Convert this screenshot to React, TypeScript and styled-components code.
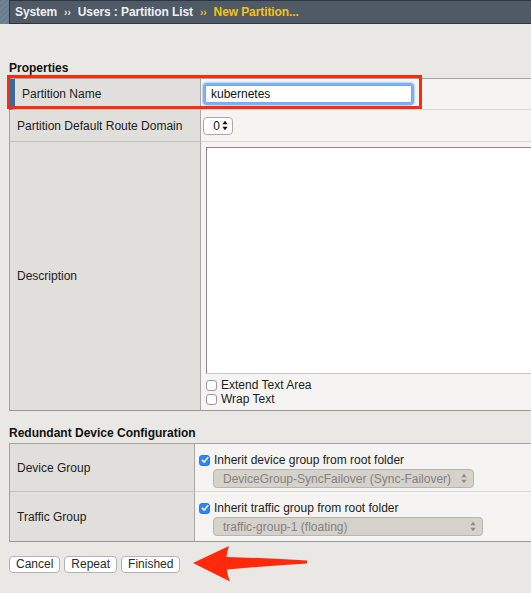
import React from 'react';
import styled, { createGlobalStyle } from 'styled-components';

const GlobalStyle = createGlobalStyle`
  html, body {
    margin: 0;
    padding: 0;
    background: #e9e8e4;
  }
  body {
    font-family: 'Liberation Sans', Arial, sans-serif;
    font-size: 12px;
    color: #1f1f1f;
  }
  #root {
    width: 531px;
    overflow: hidden;
  }
`;

const Page = styled.div`
  width: 531px;
  min-height: 593px;
  overflow: hidden;
`;

const HeaderStrip = styled.div`
  height: 24px;
  padding-left: 9px;
  background: repeating-linear-gradient(135deg, #6a7b8d 0 2px, #738496 2px 4px);
`;

const Breadcrumb = styled.div`
  height: 24px;
  box-sizing: border-box;
  display: flex;
  align-items: center;
  gap: 6px;
  padding-left: 5px;
  background: #4f5a66;
  border: 1px solid #2c353e;
  border-right: none;
  font-weight: bold;
  font-size: 12px;
  color: #eef1f4;
`;

const Crumb = styled.span<{ $current?: boolean }>`
  color: ${(p) => (p.$current ? '#f2c318' : '#eef1f4')};
  letter-spacing: -0.1px;
`;

const Sep = styled.span<{ $current?: boolean }>`
  font-size: 10px;
  margin: 0 1px;
  color: ${(p) => (p.$current ? '#f2c318' : '#dfe4e8')};
`;

const Content = styled.div`
  padding: 0 0 20px 9px;
`;

const SectionTitle = styled.div<{ $top: number }>`
  margin-top: ${(p) => p.$top}px;
  margin-bottom: 3px;
  font-weight: bold;
  font-size: 12px;
  line-height: 14px;
  color: #111;
`;

const TableWrap = styled.div`
  position: relative;
  width: 540px;
`;

const FormTable = styled.div<{ $labelWidth: number }>`
  display: grid;
  grid-template-columns: ${(p) => p.$labelWidth}px 1fr;
  border: 1px solid #a3a29f;
  border-right: none;
  border-bottom: 1px solid #999894;
`;

const LabelCell = styled.div<{ $height: number; $marked?: boolean; $last?: boolean }>`
  height: ${(p) => p.$height}px;
  box-sizing: border-box;
  display: flex;
  align-items: center;
  padding-left: 7px;
  background: #e0dfdb;
  border-right: 1px solid #a9a8a5;
  border-bottom: ${(p) => (p.$last ? 'none' : '1px solid #c4c3bf')};
  border-left: ${(p) => (p.$marked ? '6px solid #3a6898' : 'none')};
  margin-left: ${(p) => (p.$marked ? '-1px' : '0')};
  font-size: 12px;
  color: #1c1c1c;
`;

const ValueCell = styled.div<{ $height: number; $pad: string; $last?: boolean; $center?: boolean }>`
  height: ${(p) => p.$height}px;
  box-sizing: border-box;
  padding: ${(p) => p.$pad};
  background: #f5f4f2;
  border-bottom: ${(p) => (p.$last ? 'none' : '1px solid #d8d7d4')};
  display: flex;
  flex-direction: column;
  justify-content: ${(p) => (p.$center ? 'center' : 'flex-start')};
  align-items: flex-start;
`;

const Highlight = styled.div`
  position: absolute;
  left: -2px;
  top: -3px;
  width: 409px;
  height: 28px;
  border: 3px solid #ff2a0c;
  pointer-events: none;
`;

const TextInput = styled.input`
  width: 207px;
  height: 18px;
  box-sizing: border-box;
  margin-left: 4px;
  padding: 0 5px;
  border: 1px solid #7aa7e8;
  box-shadow: 0 0 0 2px #7fb0f6, 0 0 1px 3px #b9d3f8;
  border-radius: 2px;
  background: #fff;
  font-family: 'Liberation Sans', Arial, sans-serif;
  font-size: 12px;
  color: #111;
  outline: none;
`;

const Spinner = styled.div`
  width: 30px;
  height: 18px;
  box-sizing: border-box;
  margin-left: 2px;
  display: flex;
  align-items: center;
  justify-content: flex-end;
  gap: 2px;
  padding-right: 4px;
  border: 1px solid #a9a9a9;
  border-radius: 4px;
  background: #fff;
  font-size: 12px;
  color: #111;
`;

const TextArea = styled.textarea`
  width: 340px;
  height: 227px;
  box-sizing: border-box;
  margin: 0;
  border: 1px solid #8a8a8a;
  border-right-color: #c8c8c8;
  border-bottom-color: #c8c8c8;
  background: #fff;
  resize: none;
  display: block;
`;

const CheckRow = styled.label`
  display: flex;
  align-items: center;
  gap: 4px;
  height: 14px;
  font-size: 12px;
  color: #1c1c1c;
`;

const Gap = styled.div`
  height: 4px;
`;

const Box = styled.span<{ $checked?: boolean }>`
  width: 11px;
  height: 11px;
  box-sizing: border-box;
  border-radius: 3px;
  display: inline-flex;
  align-items: center;
  justify-content: center;
  border: 1px solid ${(p) => (p.$checked ? '#2d78ee' : '#9c9c9c')};
  background: ${(p) => (p.$checked ? '#3584f5' : '#fff')};
  flex-shrink: 0;
`;

const FakeSelect = styled.div<{ $width: number }>`
  width: ${(p) => p.$width}px;
  height: 19px;
  box-sizing: border-box;
  margin: 2px 0 0 14px;
  display: flex;
  align-items: center;
  justify-content: space-between;
  padding: 0 6px 0 9px;
  border: 1px solid #b8b4ae;
  border-radius: 4px;
  background: #d5d1cb;
  font-size: 12px;
  color: #85827e;
`;

const ButtonBar = styled.div`
  display: flex;
  align-items: center;
  gap: 4px;
  margin-top: 3px;
`;

const Button = styled.button`
  height: 17px;
  box-sizing: border-box;
  padding: 0 6px;
  border: 1px solid #b3b3b3;
  border-radius: 4px;
  background: #fff;
  font-family: 'Liberation Sans', Arial, sans-serif;
  font-size: 12px;
  line-height: 15px;
  color: #2a2a2a;
`;

const Arrow = styled.svg`
  margin-left: 8px;
  flex-shrink: 0;
`;

const Check = () => (
  <svg width="8" height="8" viewBox="0 0 8 8">
    <path d="M1.3 4.2 L3.2 6.1 L6.8 1.6" fill="none" stroke="#fff" strokeWidth="1.5" strokeLinecap="round" strokeLinejoin="round" />
  </svg>
);

const UpDown = ({ color }: { color: string }) => (
  <svg width="6" height="11" viewBox="0 0 6 11">
    <path d="M3 0.8 L5.6 4.3 H0.4 Z" fill={color} />
    <path d="M3 10.2 L5.6 6.7 H0.4 Z" fill={color} />
  </svg>
);

export default function App() {
  return (
    <Page>
      <GlobalStyle />
      <HeaderStrip>
        <Breadcrumb>
          <Crumb>System</Crumb>
          <Sep>››</Sep>
          <Crumb>Users : Partition List</Crumb>
          <Sep $current>››</Sep>
          <Crumb $current>New Partition...</Crumb>
        </Breadcrumb>
      </HeaderStrip>

      <Content>
        <SectionTitle $top={37}>Properties</SectionTitle>
        <TableWrap>
          <FormTable $labelWidth={191}>
            <LabelCell $height={31} $marked>Partition Name</LabelCell>
            <ValueCell $height={31} $pad="0" $center>
              <TextInput defaultValue="kubernetes" />
            </ValueCell>

            <LabelCell $height={32}>Partition Default Route Domain</LabelCell>
            <ValueCell $height={32} $pad="0" $center>
              <Spinner>
                0<UpDown color="#111" />
              </Spinner>
            </ValueCell>

            <LabelCell $height={268} $last>Description</LabelCell>
            <ValueCell $height={268} $pad="5px 0 0 5px" $last>
              <TextArea />
              <Gap />
              <CheckRow>
                <Box />
                Extend Text Area
              </CheckRow>
              <CheckRow>
                <Box />
                Wrap Text
              </CheckRow>
            </ValueCell>
          </FormTable>
          <Highlight />
        </TableWrap>

        <SectionTitle $top={15}>Redundant Device Configuration</SectionTitle>
        <TableWrap>
          <FormTable $labelWidth={185}>
            <LabelCell $height={48}>Device Group</LabelCell>
            <ValueCell $height={48} $pad="9px 0 0 4px">
              <CheckRow>
                <Box $checked>
                  <Check />
                </Box>
                Inherit device group from root folder
              </CheckRow>
              <FakeSelect $width={261}>
                DeviceGroup-SyncFailover (Sync-Failover)
                <UpDown color="#8d8a86" />
              </FakeSelect>
            </ValueCell>

            <LabelCell $height={49} $last>Traffic Group</LabelCell>
            <ValueCell $height={49} $pad="9px 0 0 4px" $last>
              <CheckRow>
                <Box $checked>
                  <Check />
                </Box>
                Inherit traffic group from root folder
              </CheckRow>
              <FakeSelect $width={270}>
                traffic-group-1 (floating)
                <UpDown color="#8d8a86" />
              </FakeSelect>
            </ValueCell>
          </FormTable>
        </TableWrap>

        <ButtonBar>
          <Button>Cancel</Button>
          <Button>Repeat</Button>
          <Button>Finished</Button>
          <Arrow width="116" height="38" viewBox="0 0 116 38">
            <path
              d="M1 18 L37 1 Q35 7 34.5 12 Q75 13 115 15.5 L115 18.5 Q75 21 35 24.5 Q35 30 38 36.5 Z"
              fill="#ff2a0c"
            />
          </Arrow>
        </ButtonBar>
      </Content>
    </Page>
  );
}
